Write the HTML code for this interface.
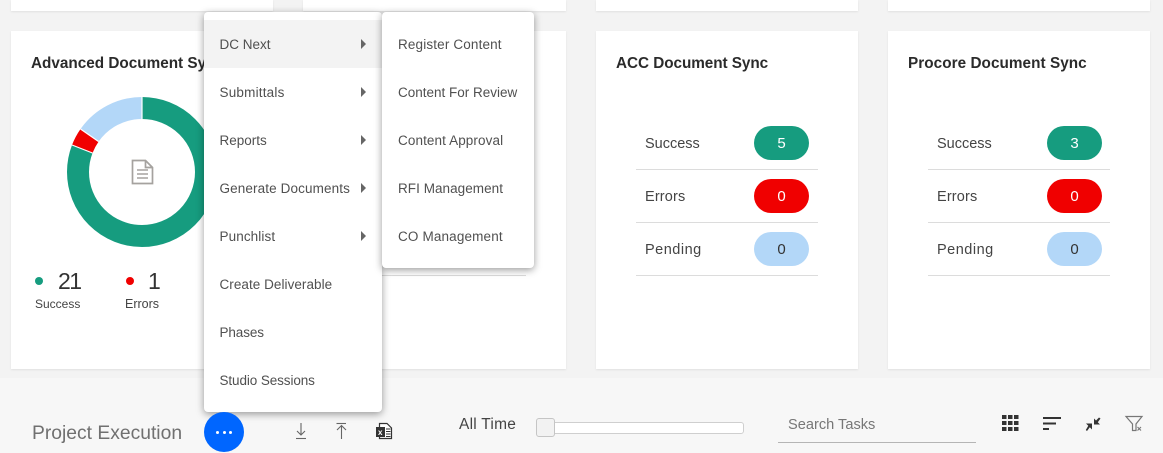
<!DOCTYPE html>
<html><head><meta charset="utf-8">
<style>
html,body{margin:0;padding:0}
body{width:1163px;height:453px;overflow:hidden;position:relative;background:#f3f3f3;font-family:"Liberation Sans",sans-serif;color:#333}
.a{position:absolute}
.card{position:absolute;background:#fff;box-shadow:0 1px 2px rgba(0,0,0,.08)}
.t{position:absolute;white-space:nowrap}
.title{font-weight:700;font-size:15.3px;color:#2b2b2b;line-height:20px}
.menu{position:absolute;background:#fff;border-radius:4px;box-shadow:0 2px 8px rgba(0,0,0,.4)}
.mi{position:absolute;left:0;right:0;height:48px;line-height:50px;font-size:13.5px;color:#505050;white-space:nowrap}
.arr{position:absolute;left:157px;top:19px;width:0;height:0;border-left:5px solid #666;border-top:5px solid transparent;border-bottom:5px solid transparent}
.row{position:absolute;height:52px;border-bottom:1px solid #dcdcdc}
.lbl{position:absolute;left:9px;top:11px;line-height:33px;font-size:14.5px;color:#444}
.pill{position:absolute;top:9px;width:55px;height:34px;border-radius:17px;text-align:center;line-height:35px;font-size:15px;color:#fff}
</style></head><body>
<div class="a" style="left:0;top:378px;width:1163px;height:75px;background:#f7f7f7"></div>
<div class="card" style="left:11px;top:0;width:262px;height:11px"></div>
<div class="card" style="left:303px;top:0;width:263px;height:11px"></div>
<div class="card" style="left:596px;top:0;width:262px;height:11px"></div>
<div class="card" style="left:888px;top:0;width:262px;height:11px"></div>
<div class="card" style="left:11px;top:31px;width:555px;height:338px"></div>
<div class="card" style="left:596px;top:31px;width:262px;height:338px"></div>
<div class="card" style="left:888px;top:31px;width:262px;height:338px"></div>

<div class="t title" style="left:31px;top:54px">Advanced Document Sync</div>
<svg class="a" style="left:60px;top:90px" width="164" height="164" viewBox="-82 -82 164 164">
<g fill="none" stroke-width="22">
<circle r="64" stroke="#169c7f" stroke-dasharray="325 402" transform="rotate(-90)"/>
<circle r="64" stroke="#f00000" stroke-dasharray="15.4 402" stroke-dashoffset="-325" transform="rotate(-90)"/>
<circle r="64" stroke="#b3d7f8" stroke-dasharray="61.6 402" stroke-dashoffset="-340.4" transform="rotate(-90)"/>
</g>
<g stroke="#fff" stroke-width="1.2"><line x1="0" y1="-53" x2="0" y2="-75"/><line x1="-49.5" y1="-19" x2="-70" y2="-27"/><line x1="-43.5" y1="-30.5" x2="-61.5" y2="-43"/></g>
<g fill="none" stroke="#a5a29f" stroke-width="1.7" transform="translate(0,-1)"><path d="M-9.5 -10.5H3.5L10.5 -3.5V12.500H-9.5Z"/><path d="M3.500 -10.500V-3.500H10.500"/><path d="M-5 -1H6M-5 3H6M-5 7H6" stroke-width="1.400"/></g>
</svg>
<div class="a" style="left:35px;top:277px;width:8px;height:8px;border-radius:50%;background:#169c7f"></div>
<div class="t" style="left:58px;top:267px;font-size:23px;letter-spacing:-1.500px;line-height:28px;color:#333">21</div>
<div class="t" style="left:35px;top:296px;font-size:12px;line-height:17px;color:#444">Success</div>
<div class="a" style="left:126px;top:277px;width:8px;height:8px;border-radius:50%;background:#f00000"></div>
<div class="t" style="left:148px;top:267px;font-size:23px;line-height:28px;color:#333">1</div>
<div class="t" style="left:125px;top:296px;font-size:12.500px;line-height:17px;color:#444">Errors</div>
<div class="a" style="left:382px;top:275px;width:144px;height:1px;background:#dcdcdc"></div>

<div class="t title" style="left:616px;top:54px;letter-spacing:-.05px">ACC Document Sync</div>
<div class="row" style="left:636px;top:117px;width:182px"><div class="lbl">Success</div><div class="pill" style="left:118px;background:#169c7f">5</div></div>
<div class="row" style="left:636px;top:170px;width:182px"><div class="lbl" style="letter-spacing:.15px">Errors</div><div class="pill" style="left:118px;background:#f00000">0</div></div>
<div class="row" style="left:636px;top:223px;width:182px"><div class="lbl" style="letter-spacing:.5px">Pending</div><div class="pill" style="left:118px;background:#b3d7f8;color:#333">0</div></div>

<div class="t title" style="left:908px;top:54px;letter-spacing:.05px">Procore Document Sync</div>
<div class="row" style="left:928px;top:117px;width:182px"><div class="lbl">Success</div><div class="pill" style="left:119px;background:#169c7f">3</div></div>
<div class="row" style="left:928px;top:170px;width:182px"><div class="lbl" style="letter-spacing:.15px">Errors</div><div class="pill" style="left:119px;background:#f00000">0</div></div>
<div class="row" style="left:928px;top:223px;width:182px"><div class="lbl" style="letter-spacing:.5px">Pending</div><div class="pill" style="left:119px;background:#b3d7f8;color:#333">0</div></div>

<div class="menu" style="left:204px;top:12px;width:178px;height:400px">
<div class="mi" style="top:8px;background:#f3f3f3;padding-left:15.5px;width:162.5px">DC Next<span class="arr"></span></div>
<div class="mi" style="top:56px;padding-left:15.5px;letter-spacing:.2px">Submittals<span class="arr"></span></div>
<div class="mi" style="top:104px;padding-left:15.5px">Reports<span class="arr"></span></div>
<div class="mi" style="top:152px;padding-left:15.5px;letter-spacing:.12px">Generate Documents<span class="arr"></span></div>
<div class="mi" style="top:200px;padding-left:15.5px;letter-spacing:.1px">Punchlist<span class="arr"></span></div>
<div class="mi" style="top:248px;padding-left:15.5px;letter-spacing:.05px">Create Deliverable</div>
<div class="mi" style="top:296px;padding-left:15.5px;letter-spacing:-.1px">Phases</div>
<div class="mi" style="top:344px;padding-left:15.5px;letter-spacing:-.1px">Studio Sessions</div>
</div>
<div class="menu" style="left:382px;top:12px;width:152px;height:256px">
<div class="mi" style="top:8px;padding-left:16px;letter-spacing:.15px">Register Content</div>
<div class="mi" style="top:56px;padding-left:16px">Content For Review</div>
<div class="mi" style="top:104px;padding-left:16px;letter-spacing:.1px">Content Approval</div>
<div class="mi" style="top:152px;padding-left:16px;letter-spacing:.05px">RFI Management</div>
<div class="mi" style="top:200px;padding-left:16px;letter-spacing:.15px">CO Management</div>
</div>

<div class="t" style="left:32px;top:421px;font-size:19.3px;line-height:26px;color:#707070">Project Execution</div>
<div class="a" style="left:204px;top:412px;width:40px;height:40px;border-radius:50%;background:#0066ff"></div>
<div class="a" style="left:216px;top:430.5px;width:3px;height:3px;border-radius:50%;background:#fff"></div>
<div class="a" style="left:222.5px;top:430.5px;width:3px;height:3px;border-radius:50%;background:#fff"></div>
<div class="a" style="left:229px;top:430.5px;width:3px;height:3px;border-radius:50%;background:#fff"></div>

<svg class="a" style="left:290px;top:418px" width="110" height="28" viewBox="0 0 110 28" fill="none">
<g stroke="#666" stroke-width="1.1"><path d="M11 5V17M7 13L11 17L15 13"/><path d="M6 20.500H16"/>
<path d="M46.500 5.500H56"/><path d="M51.500 21V7.500M47 12L51.500 7.500L56 12"/></g>
<path d="M89.500 5.500H97L101.500 10V20.500H89.500Z" fill="#fff" stroke="#333" stroke-width="1.200"/>
<path d="M96 11H100.500M96 13.500H100.500M96 16H100.500M96 18.500H100.500" stroke="#333" stroke-width="1"/>
<rect x="86" y="9" width="9" height="10" fill="#333"/>
<text x="88" y="17" font-family="Liberation Sans" font-size="8" font-weight="700" fill="#fff">x</text>
</svg>

<div class="t" style="left:459px;top:415px;font-size:15.5px;letter-spacing:.25px;line-height:20px;color:#444">All Time</div>
<div class="a" style="left:553px;top:422px;width:189px;height:10px;background:#fff;border:1px solid #cfcfcf;border-radius:0 3px 3px 0"></div>
<div class="a" style="left:536px;top:418px;width:17px;height:17px;background:#f2f2f2;border:1px solid #c5c5c5;border-radius:3px"></div>

<div class="t" style="left:788px;top:415px;font-size:14.6px;line-height:20px;color:#777">Search Tasks</div>
<div class="a" style="left:778px;top:442px;width:198px;height:1px;background:#b5b5b5"></div>

<svg class="a" style="left:1000px;top:412px" width="145" height="24" viewBox="0 0 145 24">
<g fill="#333"><rect x="2" y="3" width="4.500" height="4"/><rect x="8" y="3" width="4.500" height="4"/><rect x="14" y="3" width="4.500" height="4"/>
<rect x="2" y="9" width="4.500" height="4"/><rect x="8" y="9" width="4.500" height="4"/><rect x="14" y="9" width="4.500" height="4"/>
<rect x="2" y="15" width="4.500" height="4"/><rect x="8" y="15" width="4.500" height="4"/><rect x="14" y="15" width="4.500" height="4"/>
<rect x="43" y="5" width="18" height="2"/><rect x="43" y="10.500" width="13" height="2"/><rect x="43" y="16" width="6" height="2"/>
<path d="M94 6.500V12.500H100L97.800 10.300L100.500 6.500L99 5.500L96 8.500Z"/>
<path d="M86 11.500H92V17.500L89.800 15.300L87 19L85.800 18L88.300 13.800Z"/></g>
<path d="M126 4.500H142L136 12V18.500H132.500V12Z" fill="none" stroke="#777" stroke-width="1.200"/>
<path d="M137.500 15L141 18.500M141 15L137.500 18.500" stroke="#777" stroke-width="1.100"/>
</svg>
</body></html>
